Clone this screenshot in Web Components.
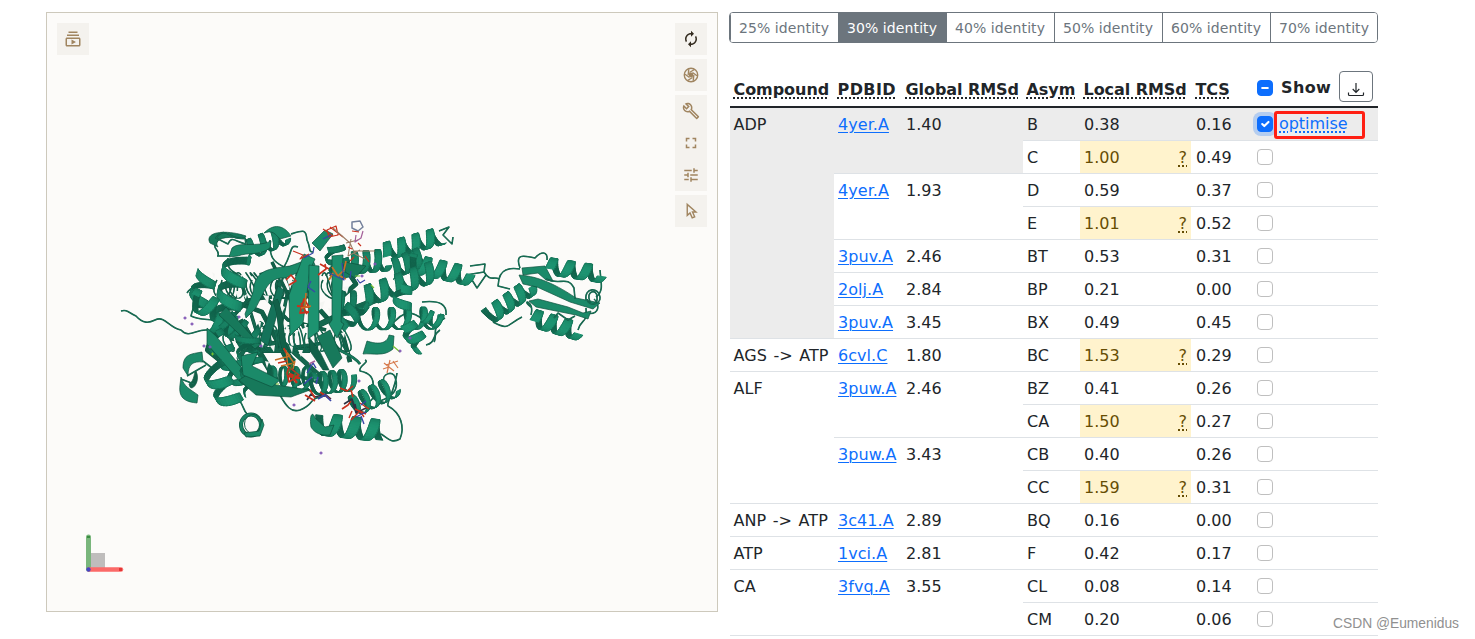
<!DOCTYPE html>
<html lang="en">
<head>
<meta charset="utf-8">
<title>Structure hits</title>
<style>
html,body{margin:0;height:100%;overflow:hidden;background:#fff}
body{font-family:"DejaVu Sans",Verdana,sans-serif;font-size:16px;line-height:24px;color:#212529}
</style>
</head>
<body>
<hit-page>
  <mol-viewer slot="viewer"></mol-viewer>
  <identity-tabs slot="main" active="30"></identity-tabs>
  <hit-table slot="main"></hit-table>
</hit-page>
<script>
const define=(name,html,init)=>customElements.define(name,class extends HTMLElement{
  constructor(){super();this.attachShadow({mode:'open'});}
  connectedCallback(){this.shadowRoot.innerHTML=html;if(init)init.call(this,this.shadowRoot);}
});

/* ---------- icons ---------- */
const ICONS={
rotate:'<path d="M12 6v3l4-4-4-4v3c-4.42 0-8 3.58-8 8 0 1.57.46 3.03 1.24 4.26L6.7 14.8c-.45-.83-.7-1.79-.7-2.8 0-3.31 2.69-6 6-6zm6.76 1.74L17.3 9.2c.44.84.7 1.79.7 2.8 0 3.31-2.69 6-6 6v-3l-4 4 4 4v-3c4.42 0 8-3.58 8-8 0-1.57-.46-3.03-1.24-4.26z"/>',
aperture:'<g fill="none" stroke="currentColor" stroke-width="1.8"><circle cx="12" cy="12" r="9"/><path d="M10 8.6 16.5 4.6M14 8.6 20 13M15.8 12 15 19.6M14 15.4 7.5 19.4M10 15.4 4 11M8.2 12 9 4.4"/></g><circle cx="12" cy="12" r="3.2"/>',
wrench:'<path d="M22.61 18.99l-9.08-9.08c.93-2.34.45-5.1-1.44-7C9.79.61 6.21.4 3.66 2.26L7.5 6.11 6.08 7.52 2.25 3.69C.39 6.23.6 9.82 2.9 12.11c1.86 1.86 4.57 2.35 6.89 1.48l9.11 9.11c.39.39 1.02.39 1.41 0l2.3-2.3c.4-.38.4-1.01 0-1.41zm-3 1.6l-9.46-9.46c-.61.45-1.29.72-2 .82-1.36.2-2.79-.21-3.83-1.25C3.37 9.76 2.93 8.5 3 7.26l3.09 3.09 4.24-4.24-3.09-3.09c1.24-.07 2.49.37 3.44 1.31 1.08 1.08 1.49 2.57 1.24 3.96-.12.71-.42 1.37-.88 1.96l9.45 9.45-.88.89z"/>',
expand:'<path d="M7 14H5v5h5v-2H7v-3zm-2-4h2V7h3V5H5v5zm12 7h-3v2h5v-5h-2v3zM14 5v2h3v3h2V5h-5z"/>',
tune:'<path d="M3 17v2h6v-2H3zM3 5v2h10V5H3zm10 16v-2h8v-2h-8v-2h-2v6h2zM7 9v2H3v2h4v2h2V9H7zm14 4v-2H11v2h10zm-6-4h2V7h4V5h-4V3h-2v6z"/>',
cursor:'<path fill="none" stroke="currentColor" stroke-width="1.9" d="M7 3.2v14.6l3.7-3.2 2.9 6.6 3.3-1.5-2.9-6.4h4.6z"/>',
states:'<path d="M4 6h16v2H4zm2-4h12v2H6zm14 8H4c-1.1 0-2 .9-2 2v8c0 1.1.9 2 2 2h16c1.1 0 2-.9 2-2v-8c0-1.1-.9-2-2-2zm0 10H4v-8h16v8zm-10-7.27v6.53L16 16z"/>'
};
define('mol-icon','<style>:host{display:grid;place-items:center;box-sizing:border-box;width:32px;height:32px;padding:0 1px 0 0;color:#a08560}:host([dark]){color:#332b1f}svg{display:block;fill:currentColor}</style><svg width="18" height="18" viewBox="0 0 24 24"></svg>',
function(r){r.querySelector('svg').innerHTML=ICONS[this.getAttribute('name')];});
define('tool-group','<style>:host{display:flex;flex-direction:column;background:#f4f2ee}</style><slot></slot>');

/* ---------- cartoon drawing ---------- */
function drawProtein(){
  const out=[];
  const f=n=>n.toFixed(1);
  const mix=k=>{k=Math.max(0,Math.min(1,k));const a=[10,78,59],b=[29,148,113];return 'rgb('+a.map((v,i)=>Math.round(v+(b[i]-v)*k)).join()+')';};
  /* ribbon wound round an axis; k opens the turns into visible loops */
  const helix=(x1,y1,x2,y2,r,turns,w,ph=0,dim=1,k=.26)=>{
    const L=Math.hypot(x2-x1,y2-y1),ux=(x2-x1)/L,uy=(y2-y1)/L,nx=-uy,ny=ux,N=Math.ceil(turns*24),q=[];
    const pt=i=>{const t=i/N,a=ph+t*turns*2*Math.PI,s=L*t+k*r*Math.sin(a);return[x1+ux*s+nx*r*Math.cos(a),y1+uy*s+ny*r*Math.cos(a),Math.sin(a)];};
    for(let i=0;i<N;i++){const a=pt(i),b=pt(i+1);q.push([(a[2]+b[2])/2,a,b]);}
    q.sort((a,b)=>a[0]-b[0]);
    for(const [z,a,b] of q){
      const h=w/2*(z<0?.6+.12*(z+1):.72+.24*z),c=mix((z<0?.3+.2*(z+1):.5+.5*z)*dim);
      out.push(`<path d="M${f(a[0]-ux*h)} ${f(a[1]-uy*h)}L${f(b[0]-ux*h)} ${f(b[1]-uy*h)}L${f(b[0]+ux*h)} ${f(b[1]+uy*h)}L${f(a[0]+ux*h)} ${f(a[1]+uy*h)}z" fill="${c}" stroke="${c}" stroke-width="1"/>`);
      out.push(`<path d="M${f(a[0]-ux*h)} ${f(a[1]-uy*h)}L${f(b[0]-ux*h)} ${f(b[1]-uy*h)}M${f(b[0]+ux*h)} ${f(b[1]+uy*h)}L${f(a[0]+ux*h)} ${f(a[1]+uy*h)}" stroke="#0f5f48" stroke-width=".6"/>`);
    }
  };
  const coil=(d,w=1.2,c='#1a7a5d')=>out.push(`<path d="${d}" fill="none" stroke="#115a45" stroke-width="${w+.4}"/><path d="${d}" fill="none" stroke="${c}" stroke-width="${w*.6}"/>`);
  const band=(d,w=7,c='#1b8a69')=>out.push(`<path d="${d}" fill="none" stroke="#0d523e" stroke-width="${w+.9}"/><path d="${d}" fill="none" stroke="${c}" stroke-width="${w}"/>`);
  const poly=(d,c='#1b8a69')=>out.push(`<path d="${d}" fill="${c}" stroke="#0d523e" stroke-width=".7"/>`);
  const stick=(d,c,w=1.5)=>out.push(`<path d="${d}" fill="none" stroke="${c}" stroke-width="${w*.8}"/>`);
  const D='#126149',M='#17795b';

  /* long loops */
  coil('M121 311C127 309 129 313 136 316C143 324 149 323 155 320C165 315 169 328 181 330C190 340 198 326 212 331');
  coil('M187 293C192 285 197 289 202 284M190 292C198 299 192 311 191 316C199 320 207 319 213 320');
  coil('M217 256H230M218 240C210 250 220 248 218 256M228 258C226 272 235 271 245 280M270 240C269 258 274 262 284 267C293 252 289 244 298 247');
  coil('M291 234C304 230 306 229 307 240C311 248 308 252 313 252');
  coil('M439 231L449 227L443 235L452 244L453 237M470 266L485 264L484 272L466 275M464 285L472 280L477 288L486 275');
  coil('M484 272C490 282 494 276 499 279C501 270 508 267 520 269M499 279L498 286L510 289M520 268C515 254 522 255 535 258C541 251 548 251 547 260');
  coil('M422 302C441 300 447 305 446 315M445 318C430 326 438 336 434 342M390 327C410 300 420 320 430 324');
  coil('M440 330C432 335 436 343 426 345M365 360C370 362 358 366 360 371C371 373 374 379 373 387C377 402 367 401 365 407');
  coil('M397 373C395 390 386 403 388 406C401 413 405 427 400 439C391 444 388 438 381 434M384 382C381 374 393 370 395 377C400 391 391 397 380 401');
  coil('M239 400C244 406 243 410 247 414M280 395C286 406 291 413 300 410C316 404 306 399 325 396');
  coil('M493 322C510 331 506 325 522 317M600 270C601 283 604 291 596 297M586 313C600 316 600 304 594 299M578 330C582 317 587 325 586 308M531 307C520 299 535 300 531 315');

  /* interior background ribbons */
  const back=['M240 278L256 330L286 355','M230 300L262 312L300 385','M212 310L250 350L310 350','M258 290L288 320L326 330',
  'M262 322L239 358L264 390','M240 320L276 380','M275 330L296 375L328 385','M320 310L343 336L350 362','M310 329L350 310L376 300',
  'M226 324L248 300L272 297','M230 338L286 345L320 376','M216 325L208 350L240 376','M288 290L276 350L324 343',
  'M340 260L356 284L338 300','M260 276L312 264','M272 262L304 328','M283 272L262 350'];
  back.forEach((d,i)=>band(d,2.6+(i%3)*1.3,i%2?D:'#15684f'));
  for(let i=0;i<34;i++){
    const x=222+(i*37)%122,y=276+(i*53)%106;
    coil(`M${x} ${y}c${8-(i%5)*4} -12 ${14-i%7} 13 ${5+i%9} 20s${-18+i%6} -4 ${-10} -16`,1.1,i%2?M:D);
  }
  for(let i=0;i<64;i++){const x=212+(i*41)%136,y=272+(i*29)%112;out.push(`<path d="M${x} ${y}l${3+i%4} ${2-i%5} ${-1-i%3} ${5+i%4}z" fill="#f5f6f3"/>`);}

  /* left lobe */
  helix(248,250,284,235,10,3,6,1,.8);
  poly('M210 243C204 232 225 229 246 236L244 239C225 235 213 239 218 247z',M);
  coil('M216 238C226 224 230 242 245 238L246 244C235 242 232 235 228 244Z');
  poly('M229 257L232 248C239 241 257 248 271 241L270 248C260 256 247 252 238 256z');
  poly('M264 233C276 221 286 228 291 236L280 239C273 231 271 231 264 233z');
  helix(238,256,226,316,13,2.6,11,2.5);
  helix(207,274,197,308,11,1.7,9,.4,.9);
  helix(191,298,222,313,11,1.8,9,2);
  helix(212,322,240,327,10,2,8,0,.9);
  helix(223,320,260,344,12,3,6,.9,.75);
  poly('M226 307L260 345L255 349L219 315z',M);
  helix(212,334,242,380,11,3,7,2,.8);
  poly('M207 328L216 336L248 376L251 389L241 383L207 344z');
  poly('M245 314L253 292C255 269 269 269 290 266L312 258L315 265L285 278C267 277 265 292 255 309L246 318z');
  poly('M260 340L278 286L284 290L268 346z','#15735a');
  band('M275 300C285 320 276 347 294 362',5,D);
  helix(266,378,312,379,12,4,4,0,.8,.5);
  helix(246,334,256,392,12,3,6,.4,.8);
  poly('M239 380L253 371L276 385L310 390L291 397L256 395z',M);
  poly('M243 375L241 356L258 352L252 366L280 380L272 387z');

  /* bottom left helices */
  poly('M183 368C183 354 191 354 202 352L203 362C193 361 188 364 188 376z');
  poly('M181 377C184 387 190 389 198 395L197 403C188 402 178 400 180 385z');
  poly('M189 384C195 381 194 370 196 371C201 382 192 391 190 387z',D);
  coil('M187 376L206 365M203 361L212 368M181 379L194 384');
  helix(212,368,231,402,12,2,10,3.1);
  out.push('<ellipse cx="251" cy="425" rx="10" ry="10.5" fill="none" stroke="#0d523e" stroke-width="4"/><ellipse cx="251" cy="425" rx="10" ry="10.5" fill="none" stroke="#1b8465" stroke-width="2.8"/><ellipse cx="253" cy="424" rx="8.5" ry="9.5" fill="none" stroke="#126149" stroke-width="1"/>');
  poly('M244 433L259 431L262 419L264 425L260 436L246 437z');

  /* top and right bundle */
  helix(333,246,345,284,11,3,6,1,.7);
  helix(351,263,386,260,11,3,7,1,.85);
  helix(384,252,440,236,9,3.9,8.5,1);
  helix(392,269,424,256,10,3,7,0,.8);
  helix(410,263,468,276,9.5,3.9,9,2.4);
  helix(364,297,432,272,10.5,4.5,8.5,.3,.9);
  helix(337,303,361,303,12,2,6,1,.7);
  helix(358,319,436,318,11,4.9,5.5,2.5,.95,.45);
  helix(403,286,402,308,9,1.4,9,1.4);
  helix(341,327,360,303,10,2,8,1,.8);
  poly('M363 354L367 341C376 344 387 345 389 335L394 336L393 349C384 357 373 353 363 354z');
  helix(406,325,422,346,9,2,9,1);
  helix(425,316,442,322,7,1.7,5,0);
  helix(312,384,350,380,11,4,5,2,.85,.45);
  band('M333 337C324 350 350 350 360 364',2,M);
  helix(352,407,392,387,11,4,5,1,1,.45);
  helix(320,424,382,431,11,3.3,11,3.8);
  poly('M311 427C309 414 313 411 315 418L325 427L334 425L330 435C323 436 315 434 311 427z');
  poly('M309 337L320 352L329 370L323 370L310 351z',D);

  /* prominent strands */
  poly('M304 254L315 259L310 270L303 323L290 336L289 295Z','#1d9370');
  poly('M309 265L319 266V331L308 339Z','#1d9370');
  poly('M332 256L343 255L341 322L344 324L337 338L329 324L332 320Z','#1d906e');
  poly('M312 243L325 230L333 234L320 251Z');
  poly('M345 262L366 266L355 278L345 272z',M);
  poly('M317 337L330 330L342 358L333 368z',M);

  /* right domain */
  helix(489,316,530,287,9,3.7,8.5,3.4);
  poly('M522 268L545 266L553 281L546 280L538 273L523 275z');
  helix(548,266,600,274,8.5,3,9.5,1.3);
  helix(533,318,577,331,9,3,9.5,1.3);
  poly('M519 275C534 276 551 281 576 298L600 303L593 309L570 302L537 287L523 284z');
  poly('M529 301L538 299L568 307L583 313L591 311L588 319L576 315L536 307z');
  coil('M586 300C584 287 599 287 600 297C601 305 588 307 587 299M590 302C585 291 597 288 597 297C598 305 591 305 590 302');
  coil('M546 279C560 286 567 275 574 288L575 299');
  coil('M554 318L558 313L568 320L575 316');

  /* ligands */
  const R='#c9311d',B='#3945a8',O='#c77026',P='#a4619a',G='#9a7b63',K='#2e3242';
  stick('M327 230L336 226L338 235L329 237ZM330 227L343 237M323 229L333 236',R);
  stick('M333 228L350 243L355 254L365 259M346 243L358 240M351 239L348 256L360 250M354 251L375 251',G,1.3);
  stick('M352 222L360 221L363 227L358 231L352 228Z','#74819c',1.9);
  stick('M352 231L359 232',R);stick('M363 231L361 238L355 242L356 235',P);
  stick('M293 251L303 255L300 259L309 254M350 261L354 257M365 256L369 262M348 247L352 249M358 243L361 246',R);
  stick('M304 258L313 253L314 247M323 239L331 235M357 279L360 283L365 280M351 271L350 278',B);
  stick('M286 280L291 275L296 281L289 285M318 275L326 269L325 264M320 264L329 269',R,2);
  stick('M332 267L338 276L344 270L346 261M329 280L333 273M340 276L346 279',O,2.2);
  stick('M329 273L344 280L342 263M311 281L308 287L315 292',B);
  stick('M297 306L309 307L304 299L300 313L309 312M301 303L307 314',R,2.3);
  stick('M306 293L305 306M301 308L311 306',O,2);
  stick('M275 360L290 356L284 349L294 363L281 366M286 350L288 367M295 361L293 369',O,1.7);
  stick('M284 348L286 353M278 363L287 361M289 367L299 375L289 382L287 373Z',R,2);
  stick('M288 376L299 378L290 374L297 383',R,3);
  stick('M293 363L288 374M296 372L293 379','#4e7a31',1.8);
  stick('M307 373L313 363L316 368M318 377L316 384M304 384L312 377',B,1.8);
  stick('M309 364L315 361',P,2);
  stick('M307 400L311 394L315 397L325 394L331 399',K,2);
  stick('M305 395L315 401M320 392L330 399M310 390L315 398',R,2.2);
  stick('M318 399L325 395L331 401',B,2.2);
  stick('M340 388L347 391L353 386M351 390L353 397M342 409L348 405L351 401',R,2);
  stick('M344 404L352 399L356 413L366 408M355 404L357 414',K,2);
  stick('M351 420L360 411L364 417M355 409L366 414M360 403L369 409M352 411L349 418',R,1.8);
  stick('M361 405L366 401M361 416L364 424M356 417L366 412',B,1.7);
  stick('M384 363L394 371M390 360L387 373M393 361L398 368M386 365L398 361M383 369L389 367','#d77a4c',1.5);
  stick('M355 276H360M371 285L374 288M393 346L400 352','#75bf2f',1.5);
  for(const [x,y] of [[185,318],[192,324],[239,317],[204,346],[210,347],[261,346],[294,405],[375,264],[362,276],[410,338],[400,351],[359,381],[321,453]])stick(`M${x-1.5} ${y}h3m-1.5 -1.5v3`,'#8055b5',1.6);
  stick('M211 354h3m-1.5 -1.5v3M276 384h3','#75bf2f',1.3);
  return out.join('');
}

define('mol-viewer',`<style>
:host{display:grid;position:relative;box-sizing:border-box;width:672px;height:600px;border:1px solid #cdc9bc;background:#fcfbf9}
svg.scene{display:block}
.tools{position:absolute;top:10px;right:10px;display:flex;flex-direction:column;gap:4px}
.states{position:absolute;top:10px;left:10px}
</style>
<svg class="scene" width="670" height="598" viewBox="47 13 670 598"><g id="p" stroke-linejoin="round"></g>
<rect x="89" y="553" width="16" height="16" fill="#bfbdbc"/>
<path d="M88.5 537V569" stroke="#79b67c" stroke-width="5" stroke-linecap="round"/><path d="M89 569.5H121" stroke="#fb6a68" stroke-width="4.5" stroke-linecap="round"/>
<path d="M87 537h3" stroke="#3a8d42" stroke-width="2"/><path d="M119 569.5h3" stroke="#e23737" stroke-width="3"/><circle cx="88.5" cy="569.5" r="2.2" fill="#4545c4"/>
</svg>
<tool-group class="states"><mol-icon name="states"></mol-icon></tool-group>
<div class="tools"><tool-group><mol-icon name="rotate" dark></mol-icon></tool-group><tool-group><mol-icon name="aperture"></mol-icon></tool-group>
<tool-group><mol-icon name="wrench"></mol-icon><mol-icon name="expand"></mol-icon><mol-icon name="tune"></mol-icon></tool-group><tool-group><mol-icon name="cursor"></mol-icon></tool-group></div>`,
function(r){r.getElementById('p').innerHTML=drawProtein();});

define('identity-tabs',`<style>
:host{display:flex;height:31px;width:649px;margin-left:-1px;box-sizing:border-box;border:1px solid #6c757d;border-radius:4px;overflow:hidden}
button{flex:0 0 108px;box-sizing:border-box;min-width:0;margin:0;padding:1px 1px 0 0;border:0;border-left:1px solid #6c757d;background:#fff;color:#6c757d;font:14px/21px "DejaVu Sans",Verdana,sans-serif;letter-spacing:.1px;white-space:nowrap}
button:first-child{flex-basis:107px;border-left:0}button.on{background:#6c757d;color:#fff}
</style>`,function(r){
 for(const n of [25,30,40,50,60,70]){const b=document.createElement('button');b.textContent=n+'% identity';if(this.getAttribute('active')==n)b.className='on';r.append(b);}
});

define('check-box',`<style>:host{display:inline-block;flex:none;box-sizing:border-box;width:16px;height:16px;border:1px solid #bfbfbf;border-radius:4px;background:#fff}
:host([state]){background:#0d6efd;border-color:#0d6efd}:host([focus]){box-shadow:0 0 0 4px rgba(13,110,253,.25)}
svg{display:block;width:14px;height:14px;fill:none;stroke:#fff;stroke-width:3;stroke-linecap:round;stroke-linejoin:round}</style><svg viewBox="0 0 20 20"></svg>`,
function(r){const s=this.getAttribute('state');r.querySelector('svg').innerHTML=s==='on'?'<path d="M6 10l3 3 6-6"/>':s==='mixed'?'<path d="M6 10h8"/>':'';});

const ROWS=[
[['ADP',7],['4yer.A','1.40',2],'B','0.38','0.16'],[0,0,'C','1.00','0.49'],
[0,['4yer.A','1.93',2],'D','0.59','0.37'],[0,0,'E','1.01','0.52'],
[0,['3puv.A','2.46',1],'BT','0.53','0.31'],[0,['2olj.A','2.84',1],'BP','0.21','0.00'],[0,['3puv.A','3.45',1],'BX','0.49','0.45'],
[['AGS -> ATP',1],['6cvl.C','1.80',1],'BC','1.53','0.29'],
[['ALF',4],['3puw.A','2.46',2],'BZ','0.41','0.26'],[0,0,'CA','1.50','0.27'],[0,['3puw.A','3.43',2],'CB','0.40','0.26'],[0,0,'CC','1.59','0.31'],
[['ANP -> ATP',1],['3c41.A','2.89',1],'BQ','0.16','0.00'],[['ATP',1],['1vci.A','2.81',1],'F','0.42','0.17'],
[['CA',2],['3fvq.A','3.55',2],'CL','0.08','0.14'],[0,0,'CM','0.20','0.06']];

define('hit-table',`<style>
:host{display:block;width:648px;margin-top:24px}
table{table-layout:fixed;width:648px;border-collapse:separate;border-spacing:0}
th,td{box-sizing:border-box;padding:0 0 0 4px;text-align:left;vertical-align:top;white-space:nowrap}
th{height:41px;border-bottom:2px solid #212529;padding:11px 0 0 3.5px;font-weight:700;line-height:24px}
td{height:33px;border-bottom:1px solid #dee2e6;padding-top:5px;line-height:24px;letter-spacing:.05px}
td.cmp{padding-left:3.5px;word-spacing:1.4px}
abbr{text-decoration:underline dotted;text-decoration-thickness:2px;text-underline-offset:2px}
th abbr{letter-spacing:-.06px}
th:nth-child(2) abbr{letter-spacing:.4px}
a{color:#0d6efd;text-decoration:underline;text-underline-offset:2px;text-decoration-thickness:1px}
.hot{background:#ececec}.warn{background:linear-gradient(90deg,#fff3cd 111px,#fff 111px);color:#664d03}
.warn div{display:flex;justify-content:space-between;padding-right:5px}
.c{display:flex;align-items:center;padding-left:0;height:24px;gap:6px}
td:last-child{padding:4px 0 0 3px}
th:last-child{padding:4px 0 0 3px}
.h{display:flex;align-items:center;height:31px}.h check-box{margin-top:2px}.h span{margin:2px 8px 0 8px;letter-spacing:.4px}
.dl{display:grid;place-items:center;box-sizing:border-box;width:34px;height:31px;border:1px solid #6c757d;border-radius:4px;background:#fff}
.dl svg{margin-top:4px}
.mark{position:relative}.mark::after{content:"";position:absolute;left:-5px;top:-1px;width:91px;height:28px;box-sizing:border-box;border:3px solid #ff1f12;border-radius:3px}
.mark a{text-decoration:underline dotted 2px;letter-spacing:-.05px}
</style><table><colgroup><col style="width:104px"><col style="width:68px"><col style="width:121px"><col style="width:57px"><col style="width:112px"><col style="width:62px"><col></colgroup>
<thead><tr><th><abbr>Compound</abbr></th><th><abbr>PDBID</abbr></th><th><abbr>Global RMSd</abbr></th><th><abbr>Asym</abbr></th><th><abbr>Local RMSd</abbr></th><th><abbr>TCS</abbr></th>
<th><div class="h"><check-box state="mixed"></check-box><span>Show</span><div class="dl"><svg width="18" height="18" viewBox="0 0 18 18" fill="none" stroke="#212529" stroke-width="1.2"><path d="M9 3v9M5.7 9L9 12.3 12.3 9M1.5 12.5v2q0 1 1 1h13q1 0 1-1v-2"/></svg></div></div></th></tr></thead><tbody></tbody></table>`,
function(r){
 r.querySelector('tbody').innerHTML=ROWS.map(([c,p,a,l,t],i)=>{
  const h=i?'':' class="hot"',w=+l>=1;
  return '<tr>'+(c?`<td rowspan="${c[1]}" class="cmp${i?'':' hot'}">${c[0]}</td>`:'')+(p?`<td rowspan="${p[2]}"${h}><a>${p[0]}</a></td><td rowspan="${p[2]}"${h}>${p[1]}</td>`:'')
  +`<td${h}>${a}</td>`+(w?`<td class="warn"><div><span>${l}</span><abbr>?</abbr></div></td>`:`<td${h}>${l}</td>`)+`<td${h}>${t}</td><td${h}><div class="c">`
  +(i?'<check-box></check-box>':'<check-box state="on" focus></check-box><span class="mark"><a>optimise</a></span>')+'</div></td></tr>';}).join('');
});

define('hit-page',`<style>
:host{display:grid;grid-template-columns:672px 648px;column-gap:12px;position:relative;box-sizing:border-box;width:1475px;height:639px;padding:12px 0 0 46px;overflow:hidden;align-items:start}
.main{display:flex;flex-direction:column}
.credit{position:absolute;right:16px;bottom:5px;font:13.8px/20px "Liberation Sans",Arial,sans-serif;color:#909090}
</style><slot name="viewer"></slot><div class="main"><slot name="main"></slot></div><div class="credit">CSDN @Eumenidus</div>`);
</script>
</body>
</html>
